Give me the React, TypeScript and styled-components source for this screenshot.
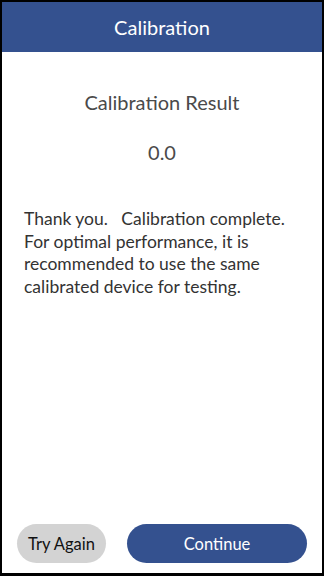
import React from 'react';
import styled, { createGlobalStyle } from 'styled-components';

const GlobalStyle = createGlobalStyle`
  html, body {
    margin: 0;
    padding: 0;
    background: #ffffff;
  }
  * {
    box-sizing: border-box;
  }
`;

const Screen = styled.div`
  width: 324px;
  height: 576px;
  display: flex;
  flex-direction: column;
  border: 2px solid #000000;
  border-bottom-width: 3px;
  background: #ffffff;
  font-family: Lato, "Open Sans", sans-serif;
`;

const Header = styled.header`
  height: 50px;
  flex-shrink: 0;
  display: flex;
  align-items: center;
  justify-content: center;
  background: #34518f;
  color: #ffffff;
  font-size: 20px;
`;

const Content = styled.main`
  flex: 1;
  display: flex;
  flex-direction: column;
  padding: 38px 22px 0;
`;

const ResultLabel = styled.h2`
  margin: 0;
  text-align: center;
  font-size: 20px;
  line-height: 24px;
  font-weight: 400;
  color: #4a4a4a;
`;

const ResultValue = styled.div`
  margin-top: 26px;
  text-align: center;
  font-size: 20px;
  line-height: 24px;
  color: #4a4a4a;
`;

const Message = styled.p`
  margin: 44px 0 0;
  font-size: 17.5px;
  line-height: 22.7px;
  color: #333333;
  white-space: pre-wrap;
`;

const Footer = styled.footer`
  display: flex;
  gap: 21px;
  padding: 0 15px 10px;
`;

const Button = styled.button<{ $primary?: boolean }>`
  height: 39px;
  border: none;
  border-radius: 20px;
  font-family: inherit;
  font-size: 16.5px;
  cursor: pointer;
  background: ${p => (p.$primary ? '#34518f' : '#d3d3d3')};
  color: ${p => (p.$primary ? '#ffffff' : '#111111')};
  width: ${p => (p.$primary ? '180px' : '89px')};
  padding: 0;
`;

export default function App() {
  return (
    <>
      <GlobalStyle />
      <Screen>
        <Header>Calibration</Header>
        <Content>
          <ResultLabel>Calibration Result</ResultLabel>
          <ResultValue>0.0</ResultValue>
          <Message>
            {'Thank you.   Calibration complete.\nFor optimal performance, it is recommended to use the same calibrated device for testing.'}
          </Message>
        </Content>
        <Footer>
          <Button>Try Again</Button>
          <Button $primary>Continue</Button>
        </Footer>
      </Screen>
    </>
  );
}
